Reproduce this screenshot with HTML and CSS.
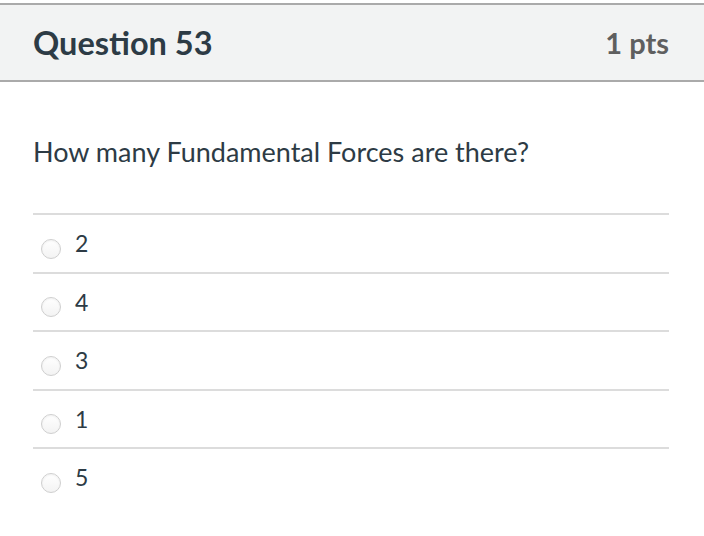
FILE: index.html
```html
<!DOCTYPE html>
<html>
<head>
  <meta charset="utf-8">
  <title>Question 53</title>
  <link rel="stylesheet" href="styles.css">
</head>
<body>
  <div class="question">
    <div class="question-header">
      <h2 class="question-title">Question 53</h2>
      <span class="question-points">1 pts</span>
    </div>
    <div class="question-body">
      <p class="question-text">How many Fundamental Forces are there?</p>
      <div class="answers">
        <label class="answer"><input type="radio" name="q53" class="answer-radio"><span class="answer-text">2</span></label>
        <label class="answer"><input type="radio" name="q53" class="answer-radio"><span class="answer-text">4</span></label>
        <label class="answer"><input type="radio" name="q53" class="answer-radio"><span class="answer-text">3</span></label>
        <label class="answer"><input type="radio" name="q53" class="answer-radio"><span class="answer-text">1</span></label>
        <label class="answer"><input type="radio" name="q53" class="answer-radio"><span class="answer-text">5</span></label>
      </div>
    </div>
  </div>
</body>
</html>
```

FILE: styles.css
```css
body {
  margin: 0;
  padding-top: 3px;
  font-family: Lato, "Liberation Sans", sans-serif;
  color: #2d3b45;
  background: #fff;
}
.question-header {
  display: flex;
  align-items: center;
  justify-content: space-between;
  height: 75px;
  box-sizing: content-box;
  padding: 0 35px 0 33px;
  background: #f2f3f3;
  border-top: 2px solid #aaaaaa;
  border-bottom: 2px solid #aaaaaa;
}
.question-title {
  margin: 0 0 1px;
  font-size: 32.5px;
  font-weight: bold;
  color: #2d3b45;
}
.question-points {
  margin-bottom: 1px;
  font-size: 29px;
  font-weight: bold;
  color: #5f5f5f;
}
.question-body { padding: 0 35px 0 33px }
.question-text {
  margin: 53px 0 45px;
  font-size: 27px;
}
.answer {
  display: flex;
  align-items: center;
  box-sizing: border-box;
  height: 58.5px;
  border-top: 2px solid #dcdcdc;
}
.answer-radio {
  -webkit-appearance: none;
  appearance: none;
  width: 20px;
  height: 20px;
  margin: 11px 14px 0 8px;
  border-radius: 50%;
  border: 1px solid #cfcfcf;
  background: linear-gradient(#ffffff, #f3f3f3);
  box-shadow: inset 0 1px 2px rgba(0,0,0,0.06);
}
.answer-text { font-size: 23px }
```
